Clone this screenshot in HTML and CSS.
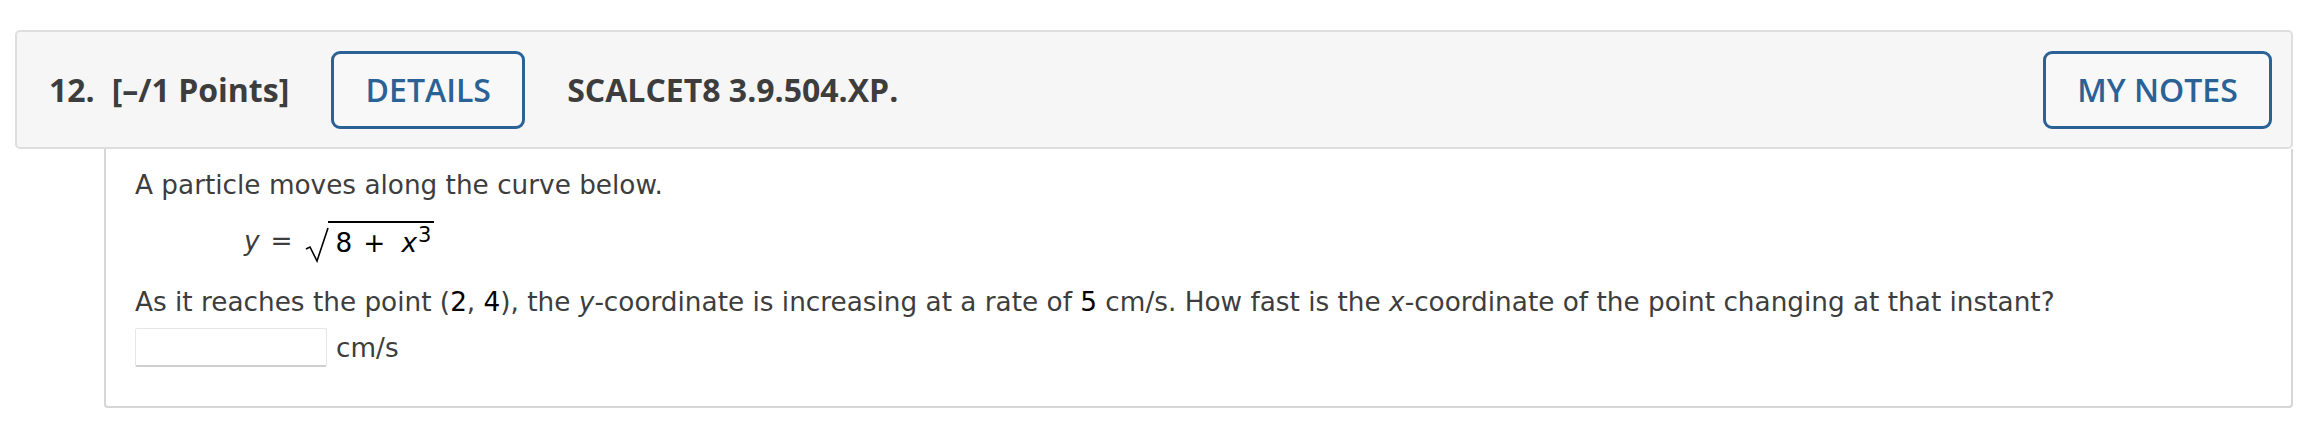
FILE: index.html
```html
<!DOCTYPE html>
<html>
<head>
<meta charset="utf-8">
<link rel="stylesheet" href="styles.css">
</head>
<body>
<div class="question">
  <div class="header">
    <span class="num">12.</span>
    <span class="points">[–/1 Points]</span>
    <button class="btn details">DETAILS</button>
    <span class="ref">SCALCET8 3.9.504.XP.</span>
    <button class="btn notes">MY NOTES</button>
  </div>
  <div class="content">
    <p class="line">A particle moves along the curve below.</p>
    <div class="eq">
      <span class="var">y</span><span class="eqsign">=</span><span class="radical"><svg class="rad" width="26" height="36" viewBox="0 0 26 36"><path d="M2 22 L6 20 L13 34 L24 1" fill="none" stroke="#000" stroke-width="1.6"/></svg><span class="radicand"><span>8</span><span class="op">+</span><span class="var dark">x</span><sup>3</sup></span></span>
    </div>
    <p class="line">As it reaches the point (<span class="dark">2</span>, <span class="dark">4</span>), the <span class="var">y</span>-coordinate is increasing at a rate of <span class="dark">5</span> cm/s. How fast is the <span class="var">x</span>-coordinate of the point changing at that instant?</p>
    <div class="answer">
      <span class="input"></span><span class="unit">cm/s</span>
    </div>
  </div>
</div>
</body>
</html>
```
FILE: styles.css
```css
html, body {
  margin: 0;
  padding: 0;
  background: #fff;
}
body {
  width: 2319px;
  height: 443px;
  overflow: hidden;
}
.question {
  margin: 30px 26px 0 15px;
}
.header {
  box-sizing: border-box;
  height: 119px;
  background: #f6f6f6;
  border: 2px solid #dedede;
  border-radius: 5px;
  display: flex;
  align-items: center;
  padding: 0 19px 0 32px;
  font-family: "Open Sans", sans-serif;
  font-weight: 700;
  font-size: 32px;
  color: #3d3d3d;
}
.num {
  margin-right: 17px;
}
.btn {
  box-sizing: border-box;
  height: 78px;
  border: 3.5px solid #2b6296;
  border-radius: 9px;
  background: #f8f8f8;
  color: #2b6296;
  font-family: "Open Sans", sans-serif;
  font-weight: 600;
  font-size: 32px;
  padding: 0;
}
.details {
  width: 194px;
  margin-left: 42px;
}
.ref {
  margin-left: 42px;
}
.notes {
  width: 229px;
  margin-left: auto;
}
.content {
  margin-left: 89px;
  border: 2px solid #d6d6d6;
  border-top: none;
  border-radius: 0 0 4px 4px;
  height: 259px;
  box-sizing: border-box;
  padding: 18px 0 0 29px;
  font-family: "DejaVu Sans", Verdana, sans-serif;
  font-size: 26.3px;
  color: #3d3d3d;
}
.line {
  margin: 0;
  line-height: 36px;
}
.dark {
  color: #000;
}
.var {
  font-style: italic;
}
.eq {
  display: flex;
  align-items: center;
  height: 36px;
  padding: 20px 0 25px 109px;
}
.eqsign {
  margin: 0 11px 0 11px;
}
.radical {
  display: inline-flex;
  align-items: flex-end;
  color: #000;
  height: 36px;
}
.rad {
  display: block;
  margin-bottom: -4px;
  margin-right: -2px;
}
.radicand {
  display: inline-block;
  white-space: nowrap;
  border-top: 2px solid #000;
  padding: 4px 3px 0 8px;
  line-height: 32px;
}
.op {
  margin: 0 16px 0 11px;
}
sup {
  font-size: 21px;
  vertical-align: 10px;
  line-height: 0;
  margin-left: 1px;
}
.answer {
  display: flex;
  align-items: center;
  margin-top: 8px;
}
.input {
  display: block;
  width: 192px;
  height: 39px;
  box-sizing: border-box;
  border: 1px solid #e6e6e6;
  border-bottom: 2px solid #cfcfcf;
  border-radius: 2px;
  background: #fff;
}
.unit {
  margin-left: 9px;
  line-height: 36px;
}
```
